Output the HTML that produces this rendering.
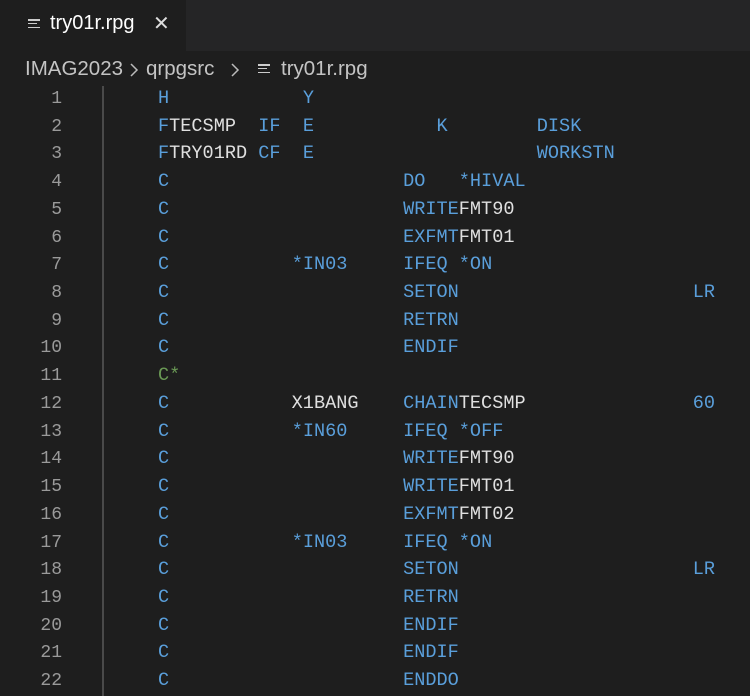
<!DOCTYPE html>
<html><head><meta charset="utf-8"><style>
html,body{margin:0;padding:0;background:#1e1e1e;width:750px;height:696px;overflow:hidden;font-family:"Liberation Sans",sans-serif}
.tabbar{position:absolute;left:0;top:0;width:750px;height:51px;background:#252526}
.tab{position:absolute;left:0;top:0;width:186px;height:51px;background:#1e1e1e;color:#fff;font-size:20px}
.tab .t{position:absolute;left:50px;top:12px}
.tab .x{position:absolute;left:153px;top:11px;font-size:20px;color:#ddd}
.ic{position:absolute;width:12px;height:11px}
.ic i{display:block;height:1.6px;background:#ccc;margin-bottom:2.2px}
.cr{position:absolute;top:57px;color:#c4c4c4;font-size:20.5px;white-space:pre}
.ln{position:absolute;left:0;width:62px;text-align:right;color:#9a9a9a;font-family:"Liberation Mono",monospace;font-size:18px}
.guide{position:absolute;left:102px;top:86px;width:2px;height:610px;background:#4a4a4a}
.code{position:absolute;left:158px;margin:0;font-family:"Liberation Mono",monospace;font-size:18.57px;color:#e0e0e0;white-space:pre}
.b{color:#5a9fdb}.g{color:#6a9955}
</style></head><body>
<div class="tabbar"><div class="tab">
<div class="ic" style="left:28px;top:19px"><i></i><i style="width:9px"></i><i></i></div>
<span class="t">try01r.rpg</span><span class="x">✕</span></div></div>
<span class="cr" style="left:25px">IMAG2023</span>
<svg style="position:absolute;left:129px;top:62px" width="10" height="16"><path d="M2 2 L8 8 L2 14" stroke="#bbb" stroke-width="1.5" fill="none"/></svg>
<span class="cr" style="left:146px">qrpgsrc</span>
<svg style="position:absolute;left:230px;top:62px" width="10" height="16"><path d="M2 2 L8 8 L2 14" stroke="#bbb" stroke-width="1.5" fill="none"/></svg>
<div class="ic" style="left:258px;top:64px"><i></i><i style="width:9px"></i><i></i></div>
<span class="cr" style="left:281px">try01r.rpg</span>
<div class="guide"></div>
<div id="c"></div>
<script>
var L=[
'<span class="b">H</span>            <span class="b">Y</span>',
'<span class="b">F</span>TECSMP  <span class="b">IF</span>  <span class="b">E</span>           <span class="b">K</span>        <span class="b">DISK</span>',
'<span class="b">F</span>TRY01RD <span class="b">CF</span>  <span class="b">E</span>                    <span class="b">WORKSTN</span>',
'<span class="b">C</span>                     <span class="b">DO   *HIVAL</span>',
'<span class="b">C</span>                     <span class="b">WRITE</span>FMT90',
'<span class="b">C</span>                     <span class="b">EXFMT</span>FMT01',
'<span class="b">C</span>           <span class="b">*IN03</span>     <span class="b">IFEQ *ON</span>',
'<span class="b">C</span>                     <span class="b">SETON</span>                     <span class="b">LR</span>',
'<span class="b">C</span>                     <span class="b">RETRN</span>',
'<span class="b">C</span>                     <span class="b">ENDIF</span>',
'<span class="g">C*</span>',
'<span class="b">C</span>           X1BANG    <span class="b">CHAIN</span>TECSMP               <span class="b">60</span>',
'<span class="b">C</span>           <span class="b">*IN60</span>     <span class="b">IFEQ *OFF</span>',
'<span class="b">C</span>                     <span class="b">WRITE</span>FMT90',
'<span class="b">C</span>                     <span class="b">WRITE</span>FMT01',
'<span class="b">C</span>                     <span class="b">EXFMT</span>FMT02',
'<span class="b">C</span>           <span class="b">*IN03</span>     <span class="b">IFEQ *ON</span>',
'<span class="b">C</span>                     <span class="b">SETON</span>                     <span class="b">LR</span>',
'<span class="b">C</span>                     <span class="b">RETRN</span>',
'<span class="b">C</span>                     <span class="b">ENDIF</span>',
'<span class="b">C</span>                     <span class="b">ENDIF</span>',
'<span class="b">C</span>                     <span class="b">ENDDO</span>'];
var h='';
for(var i=0;i<L.length;i++){var y=88+i*27.72;
h+='<div class="ln" style="top:'+(y+1)+'px">'+(i+1)+'</div><pre class="code" style="top:'+y+'px">'+L[i]+'</pre>';}
document.getElementById('c').innerHTML=h;
</script>
</body></html>
